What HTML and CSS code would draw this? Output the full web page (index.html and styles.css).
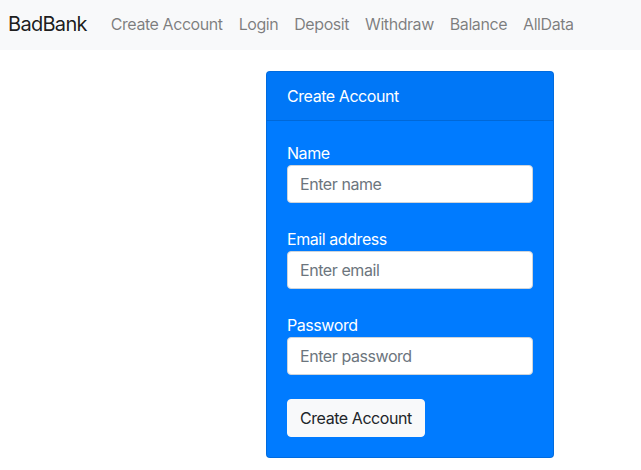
FILE: index.html
```html
<!DOCTYPE html>
<html lang="en">
<head>
<meta charset="utf-8">
<title>BadBank</title>
<link rel="stylesheet" href="styles.css">
</head>
<body>
<nav class="navbar">
  <a class="brand" href="#">BadBank</a>
  <ul class="nav">
    <li><a class="nav-link" href="#">Create Account</a></li>
    <li><a class="nav-link" href="#">Login</a></li>
    <li><a class="nav-link" href="#">Deposit</a></li>
    <li><a class="nav-link" href="#">Withdraw</a></li>
    <li><a class="nav-link" href="#">Balance</a></li>
    <li><a class="nav-link" href="#">AllData</a></li>
  </ul>
</nav>
<main class="main">
  <div class="card">
    <div class="card-header">Create Account</div>
    <div class="card-body">
      Name<br>
      <input type="text" class="form-control" placeholder="Enter name"><br>
      Email address<br>
      <input type="email" class="form-control" placeholder="Enter email"><br>
      Password<br>
      <input type="password" class="form-control" placeholder="Enter password"><br>
      <button type="submit" class="btn">Create Account</button>
    </div>
  </div>
</main>
</body>
</html>
```
FILE: styles.css
```css
html, body {
  margin: 0;
  padding: 0;
}
body {
  font-family: Inter, "Liberation Sans", sans-serif;
  font-size: 16px;
  line-height: 1.5;
  letter-spacing: -0.027em;
  color: #212529;
  background: #fff;
}
.navbar {
  display: flex;
  align-items: center;
  background: #f8f9fa;
  padding: 4px 8px 6px;
  height: 40px;
}
.brand {
  font-size: 20px;
  line-height: 30px;
  letter-spacing: -0.035em;
  padding: 5px 0;
  margin-right: 16px;
  color: rgba(0, 0, 0, 0.9);
  text-decoration: none;
}
.nav {
  display: flex;
  list-style: none;
  margin: 0;
  padding: 0;
}
.nav-link {
  display: block;
  padding: 8px;
  color: rgba(0, 0, 0, 0.5);
  text-decoration: none;
}
.main {
  padding: 21px 0 0 266px;
}
.card {
  width: 288px;
  box-sizing: border-box;
  background: #007bff;
  color: #fff;
  border: 1px solid rgba(0, 0, 0, 0.125);
  border-radius: 4px;
}
.card-header {
  padding: 12px 20px;
  background: rgba(0, 0, 0, 0.03);
  border-bottom: 1px solid rgba(0, 0, 0, 0.125);
  border-radius: 3px 3px 0 0;
}
.card-body {
  padding: 20px;
}
.form-control {
  display: block;
  width: 100%;
  box-sizing: border-box;
  height: 38px;
  padding: 6px 12px;
  font-family: inherit;
  font-size: 16px;
  line-height: 1.5;
  letter-spacing: inherit;
  color: #495057;
  background: #fff;
  border: 1px solid #ced4da;
  border-radius: 4px;
  margin: 0;
}
.form-control::placeholder {
  color: #6c757d;
  opacity: 1;
}
.btn {
  display: inline-block;
  font-family: inherit;
  font-size: 16px;
  line-height: 1.5;
  letter-spacing: inherit;
  padding: 6px 12px;
  color: #212529;
  background: #f8f9fa;
  border: 1px solid #f8f9fa;
  border-radius: 4px;
  margin: 0;
  vertical-align: middle;
}
```
